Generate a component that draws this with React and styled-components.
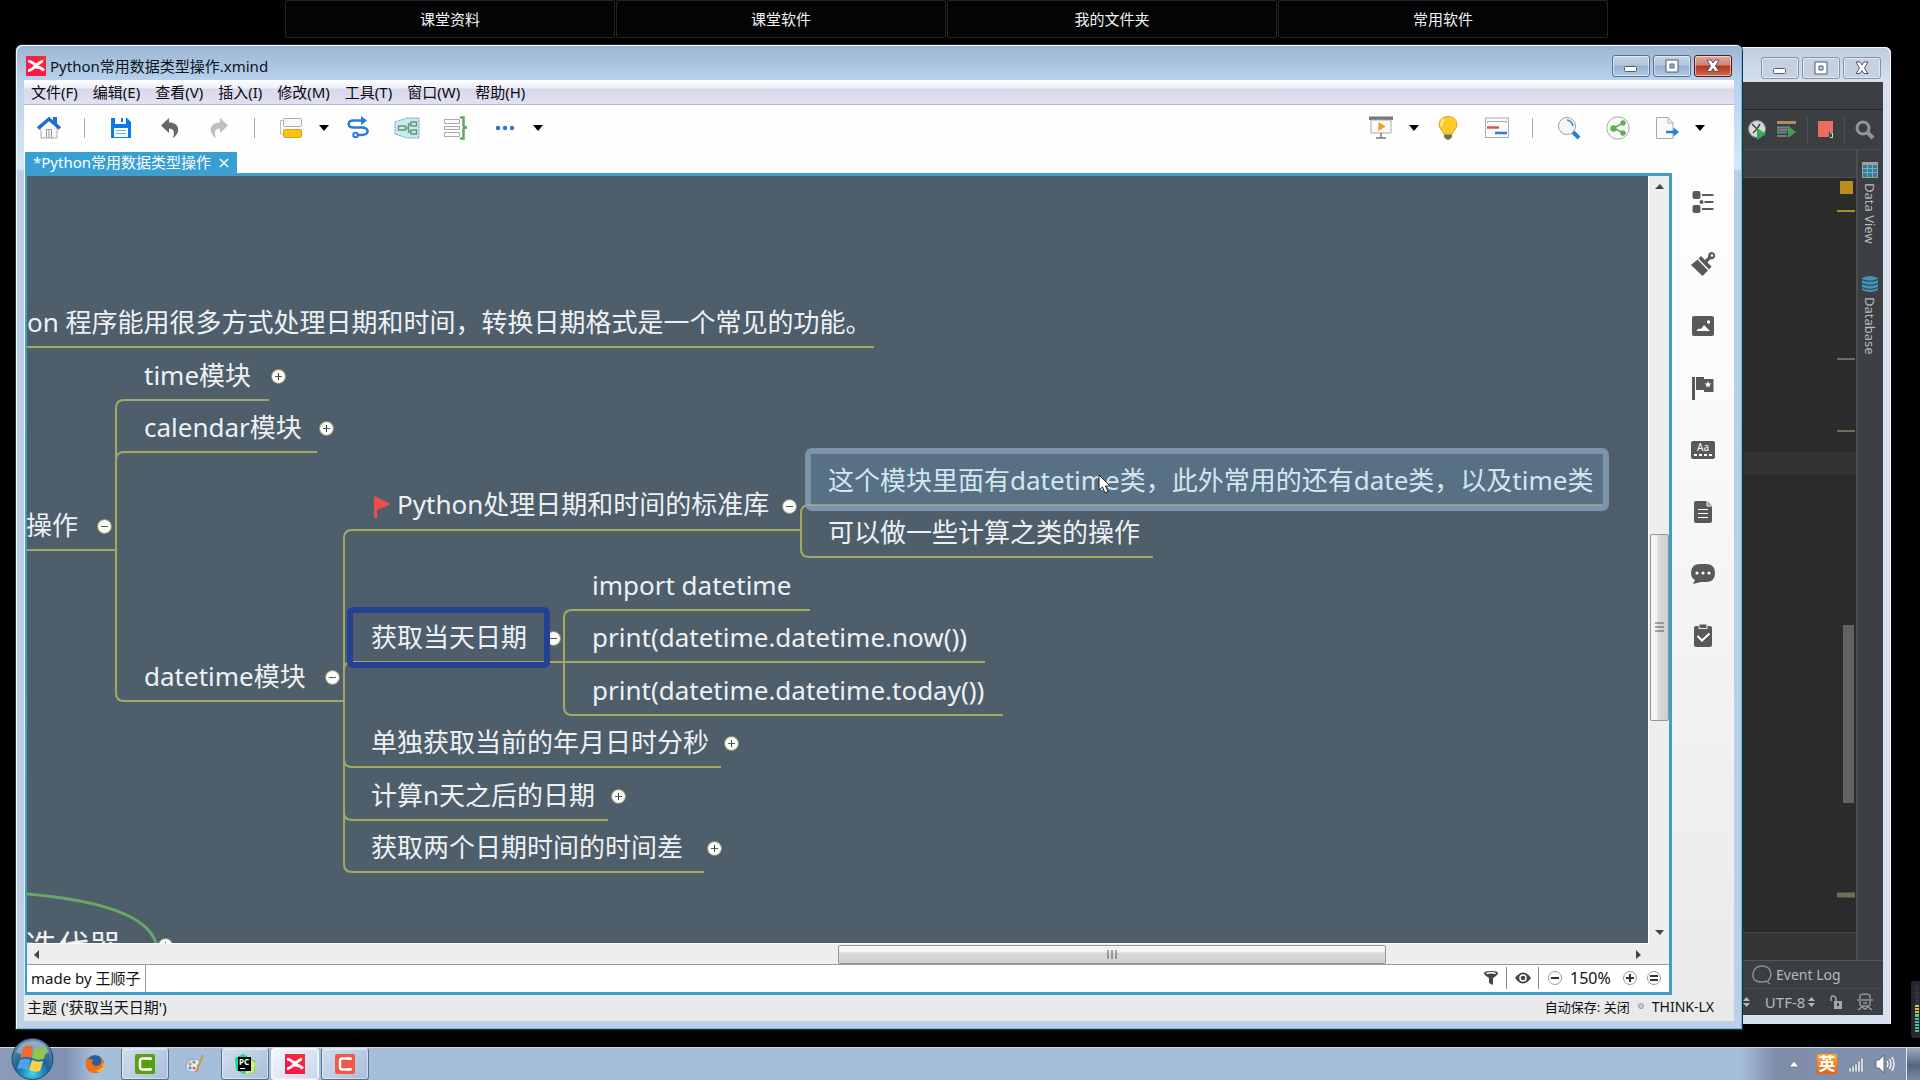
import React from "react";
import styled, { createGlobalStyle, css } from "styled-components";

const FONT = '"Noto Sans", "Noto Sans CJK SC", sans-serif';

const GlobalStyle = createGlobalStyle`
  *, *::before, *::after { box-sizing: border-box; }
  body { margin: 0; background: #000; font-family: ${FONT}; }
  button { font: inherit; color: inherit; background: none; border: 0; padding: 0; margin: 0; cursor: default; }
  svg { display: block; flex: none; }
`;

/* ---------- desktop ---------- */
const Desktop = styled.div`
  position: relative;
  display: flex;
  flex-direction: column;
  height: 100vh;
  overflow: hidden;
  background: #000;
`;
const Shelf = styled.nav`
  display: grid;
  grid-template-columns: repeat(4, 330px);
  gap: 1px;
  justify-content: center;
  height: 38px;
  padding-right: 27px;
`;
const ShelfButton = styled.button`
  padding-bottom: 2px;
  border: 1px solid #242424;
  border-radius: 2px;
  background: #030406;
  color: #f4f4f4;
  font-size: 15px;
`;
const Workspace = styled.main`
  position: relative;
  flex: 1;
`;

/* ---------- window chrome ---------- */
const Window = styled.section`
  position: absolute;
  display: flex;
  flex-direction: column;
  border-radius: 6px 6px 0 0;
`;
const MindWindow = styled(Window)`
  left: 16px;
  top: 7px;
  right: 178px;
  bottom: 18px;
  padding: 0 8px 8px;
  background: linear-gradient(#9bb5d0 0, #b8d1ec 35px, #d4e6f5 115px, #d4e6f5 124px, #b7cde8 126px, #bcd0e8 100%);
  box-shadow: inset 1px 1px 0 #f2f9ff, inset -1px -1px 0 #5fc0e6, 0 0 0 1px #18323f;
`;
const IdeWindow = styled(Window)`
  width: 220px;
  right: 29px;
  top: 9px;
  bottom: 23px;
  padding: 0 8px 9px 0;
  background: linear-gradient(#c0cddd, #d6e0ef 35px, #d7e0ef);
  box-shadow: inset -1px 1px 0 #f4f7fb;
`;
const TitleBar = styled.header`
  display: flex;
  align-items: center;
  gap: 4px;
  height: 35px;
  padding: 6px 2px 0;
  font-size: 15px;
  color: #0c1420;
`;
const WindowControls = styled.div`
  display: flex;
  gap: 3px;
  margin-left: auto;
`;
const ControlButton = styled.button`
  display: grid;
  place-items: center;
  width: 38px;
  height: 22px;
  border: 1px solid #5a7089;
  border-radius: 3px;
  background: linear-gradient(#c3d4e8 0, #b0c5de 45%, #98b0cd 50%, #b0c8e2);
  box-shadow: inset 0 0 0 1px rgba(255, 255, 255, 0.5);
  ${(p) => p.$kind === "close" && css`
    border-color: #551c20;
    background: linear-gradient(#e0a79d 0, #d28376 45%, #b5351c 50%, #cc6a4c);
  `}
  ${(p) => p.$kind === "faded" && css`
    border-color: #8593a5;
    background: #c5d1e0;
  `}
`;

/* ---------- xmind body ---------- */
const Client = styled.div`
  display: flex;
  flex-direction: column;
  flex: 1;
  min-height: 0;
  background: linear-gradient(#fff, #fbfbfb 30%, #e9e9e9);
`;
const MenuBar = styled.nav`
  display: flex;
  height: 25px;
  background: linear-gradient(#fff 0, #eceefa 8px, #d8d9ec 9px, #dfe1f2 23px);
  border-bottom: 1px solid #b4b5cd;
`;
const MenuItem = styled.button`
  padding: 0 8px 0 7px;
  font-size: 15px;
  line-height: 24px;
  color: #0a0a0a;
`;
const ToolBar = styled.div`
  display: flex;
  justify-content: space-between;
  height: 47px;
  padding: 0 25px 2px 0;
`;
const ToolGroup = styled.div`
  display: flex;
  align-items: center;
`;
const ToolButton = styled.button`
  display: grid;
  place-items: center;
  width: 49px;
  height: 40px;
`;
const DropButton = styled(ToolButton)`
  width: 18px;
`;
const ToolRule = styled.span`
  width: 23px;
  height: 20px;
  background: linear-gradient(#a9a9a9, #a9a9a9) center / 1px 100% no-repeat;
`;
const Body = styled.div`
  display: flex;
  flex: 1;
  min-height: 0;
`;
const Editor = styled.div`
  display: flex;
  flex-direction: column;
  flex: 1;
  min-width: 0;
  padding-left: 1px;
`;
const FileTab = styled.div`
  display: flex;
  align-items: center;
  align-self: flex-start;
  gap: 8px;
  height: 21px;
  padding: 0 8px;
  background: #379fd3;
  color: #fff;
  font-size: 15px;
  line-height: 21px;
`;
const EditorFrame = styled.div`
  display: flex;
  flex-direction: column;
  flex: 1;
  min-height: 0;
  border: 3px solid #429dc9;
  border-left-width: 2px;
  background: #fff;
`;
const CanvasRow = styled.div`
  display: flex;
  flex: 1;
  min-height: 0;
`;
const Canvas = styled.div`
  position: relative;
  flex: 1;
  overflow: hidden;
  background: #4f5e6b;
`;
const Lines = styled.svg`
  position: absolute;
  inset: 0;
  width: 100%;
  height: 100%;
`;
const Topic = styled.span`
  position: absolute;
  left: ${(p) => p.$x}px;
  top: ${(p) => p.$y - 21}px;
  color: ${(p) => (p.$hovered ? "#d3e6ef" : "#eef1f3")};
  font-size: ${(p) => (p.$large ? 32 : 26)}px;
  line-height: 40px;
  white-space: nowrap;
`;
const Toggle = styled.button`
  position: absolute;
  left: ${(p) => p.$x - 8}px;
  top: ${(p) => p.$y - 7}px;
  width: 15px;
  height: 15px;
  border: 1px solid #8b8f63;
  border-radius: 50%;
  background:
    linear-gradient(#555a5e, #555a5e) center / 7px 1px no-repeat,
    ${(p) => (p.$open ? "" : "linear-gradient(#333a40, #333a40) center / 1px 7px no-repeat,")}
    #fbfcf8;
`;
const HoverBox = styled.div`
  position: absolute;
  left: 778px;
  top: 272px;
  width: 804px;
  height: 63px;
  border: 6px solid rgba(145, 170, 195, 0.7);
  border-radius: 7px;
  background: rgba(100, 140, 170, 0.4);
  background-clip: padding-box;
`;
const SelectionBox = styled.div`
  position: absolute;
  left: 320px;
  top: 431px;
  width: 203px;
  height: 61px;
  border: 6px solid #234296;
  border-radius: 6px;
`;
const Pointer = styled.svg`
  position: absolute;
  left: 1071px;
  top: 298px;
`;
const VScroll = styled.div`
  display: flex;
  flex-direction: column;
  align-items: center;
  width: 21px;
  padding: 7px 0;
  background: #eee;
  border-left: 1px solid #fff;
`;
const HScroll = styled.div`
  display: flex;
  align-items: center;
  height: 21px;
  margin-right: 21px;
  padding: 0 6px;
  background: #eee;
  border-top: 1px solid #fff;
`;
const HScrollRow = styled.div`
  background: #eee;
  border-bottom: 1px solid #999;
`;
const Spacer = styled.div`
  flex: ${(p) => p.$grow} 1 0;
`;
const Thumb = styled.div`
  display: grid;
  place-items: center;
  flex: none;
  border: 1px solid #959595;
  border-radius: 2px;
  ${(p) => p.$vertical
    ? css`width: 19px; height: 187px; background: linear-gradient(90deg, #f4f4f4 35%, #dadada 40%, #cfcfcf);`
    : css`width: 548px; height: 19px; background: linear-gradient(#f4f4f4 35%, #dadada 40%, #cfcfcf);`}
`;
const SheetBar = styled.div`
  display: flex;
  align-items: center;
  height: 27px;
  background: #fff;
`;
const SheetTab = styled.button`
  height: 27px;
  padding: 0 4px 3px;
  border-right: 1px solid #999;
  font-size: 15px;
  color: #111;
`;
const SheetTools = styled.div`
  display: flex;
  align-items: center;
  margin-left: auto;
  padding: 0 3px 2px 0;
`;
const SheetTool = styled.button`
  display: grid;
  place-items: center;
  width: ${(p) => (p.$wide ? 31 : 24)}px;
  height: 24px;
`;
const SheetRule = styled.span`
  width: 1px;
  height: 22px;
  background: #8a8a8a;
`;
const ZoomValue = styled.output`
  width: 48px;
  font-size: 16px;
  color: #111;
`;
const SideBar = styled.aside`
  display: flex;
  flex-direction: column;
  width: 62px;
  padding: 19px 0 0;
`;
const SideButton = styled.button`
  display: grid;
  place-items: center;
  width: 62px;
  height: 62px;
`;
const StatusBar = styled.footer`
  display: flex;
  align-items: center;
  height: 26px;
  padding: 0 20px 4px 3px;
  font-size: 15px;
  color: #111;
`;
const SaveState = styled.span`
  display: flex;
  align-items: center;
  gap: 8px;
  margin-left: auto;
  font-size: 13px;
`;
const Licence = styled.span`
  font-size: 14px;
`;
const Dot = styled.i`
  width: 6px;
  height: 6px;
  border: 1px solid #999;
  border-radius: 50%;
  background: #ccc;
`;

/* ---------- ide ---------- */
const IdeClient = styled.div`
  display: flex;
  flex-direction: column;
  flex: 1;
  min-height: 0;
  padding-left: 72px;
  background: #3c3f41;
  color: #b6b9bb;
`;
const IdeMenu = styled.div`
  height: 28px;
  border-bottom: 1px solid #282828;
`;
const IdeTools = styled.div`
  display: flex;
  align-items: center;
  justify-content: space-between;
  height: 40px;
  padding: 0 8px 0 4px;
  border-bottom: 1px solid #4b4d4f;
`;
const IdeRule = styled.span`
  height: 26px;
  border-left: 1px dotted #5b5e60;
`;
const IdeMain = styled.div`
  display: flex;
  flex: 1;
  min-height: 0;
`;
const IdeEditor = styled.div`
  display: flex;
  flex-direction: column;
  flex: 1;
  border-right: 2px solid #4d4e50;
`;
const IdeTabs = styled.div`
  height: 28px;
  border-bottom: 1px solid #4a4b4c;
`;
const IdeCode = styled.div`
  flex: 1;
  background: linear-gradient(#2b2b2b, #2b2b2b 274px, #323232 274px, #323232 297px, #2b2b2b 297px);
`;
const IdeFoot = styled.div`
  height: 28px;
  border-top: 1px solid #454647;
  background: #333436;
`;
const Gutter = styled.svg`
  margin-left: auto;
`;
const IdeRail = styled.nav`
  display: flex;
  flex-direction: column;
  gap: 32px;
  width: 25px;
  padding-top: 12px;
`;
const RailButton = styled.button`
  display: flex;
  flex-direction: column;
  align-items: center;
  gap: 5px;
  width: 24px;
  font-size: 13px;
  line-height: 18px;
  span { writing-mode: vertical-rl; }
`;
const IdeLog = styled.button`
  display: flex;
  align-items: center;
  gap: 4px;
  height: 28px;
  padding-left: 9px;
  border-top: 1px solid #55585a;
  font-size: 14px;
`;
const IdeStatus = styled.footer`
  display: flex;
  align-items: center;
  justify-content: space-between;
  height: 27px;
  padding: 0 10px 0 0;
  font-size: 15px;
  border-top: 1px solid #47494b;
`;
const Encoding = styled.span`
  display: flex;
  align-items: center;
  gap: 3px;
`;

/* ---------- taskbar ---------- */
const TaskBar = styled.footer`
  display: flex;
  height: 33px;
  border-top: 1px solid #c7d9ec;
  background: linear-gradient(90deg, #8b9dba 0, #7f90b0 66px, #a5bfdb 94px, #a5bfdb calc(100% - 180px), #7f8da9 calc(100% - 145px), #8291ab);
`;
const StartButton = styled.button`
  width: 70px;
  height: 42px;
  margin-top: -10px;
  padding-left: 11px;
  z-index: 1;
`;
const TaskButton = styled.button`
  display: grid;
  place-items: center;
  width: 48px;
  height: 32px;
  margin: 0 1px;
  border-radius: 3px;
  ${(p) => p.$running && css`
    border: 1px solid #5b6f8c;
    border-top-color: #d5e3f2;
    background: linear-gradient(135deg, #d2deed, #a8bedb);
    box-shadow: inset 0 0 0 1px rgba(255, 255, 255, 0.45);
  `}
  ${(p) => p.$active && css`
    border-color: #f2f7fd;
    background: linear-gradient(135deg, #f4f7fb, #c8d6ec);
  `}
`;
const Tray = styled.div`
  display: flex;
  align-items: center;
  gap: 11px;
  margin-left: auto;
`;
const TrayExpander = styled.button`
  padding-right: 6px;
`;
const InputMethod = styled.button`
  width: 20px;
  height: 20px;
  border-radius: 2px;
  background: linear-gradient(#ffb030, #e85f10);
  color: #fff;
  font-size: 17px;
  font-weight: 700;
  line-height: 20px;
`;
const ShowDesktop = styled.button`
  width: 14px;
  height: 32px;
  border-left: 1px solid #dce6f0;
  background: linear-gradient(#9ba9bd, #55657e 55%, #7c8ba3);
`;
const Meter = styled.svg`
  position: absolute;
  right: 0;
  bottom: 42px;
`;

/* ---------- drawings ---------- */
const Svg = ({ w = 24, h = 24, children, ...rest }) => (
  <svg width={w} height={h} viewBox={`0 0 ${w} ${h}`} fill="none" aria-hidden="true" {...rest}>{children}</svg>
);
const Caret = () => <Svg w={10} h={6}><path d="M0 0H10L5 6Z" fill="#000" /></Svg>;
const XLogo = () => (
  <Svg w={20} h={20}>
    <defs><linearGradient id="xg" x1="0" y1="1" x2="1" y2="0"><stop stopColor="#fb124c" /><stop offset=".6" stopColor="#fb1e45" /><stop offset="1" stopColor="#ee3b22" /></linearGradient></defs>
    <rect width="20" height="20" fill="url(#xg)" />
    <path d="M2 5.500C6 4.500 6.500 8.500 10 8.500S14 5 17 5.500M2 14.500C6 15 6.500 11 10 11S15 11.500 18 14.500" stroke="#fff" strokeWidth="2.800" />
    <path d="M7.500 8H12.500V12H7.500Z" fill="#fff" />
  </Svg>
);
const ICONS = {
  home: <Svg><path d="M4 11V22H20V11L12 4Z" fill="#fafafa" stroke="#aaa" /><path d="M9.500 22V13.500H14.500V22M12 14V22" stroke="#999" /><path d="M1 12.500L12 3L23 12.500" stroke="#1d6fd4" strokeWidth="3.500" /><path d="M16 1H20V8H16Z" fill="#1d6fd4" /></Svg>,
  save: <Svg><path d="M2 2H18L22 6V22H2Z" fill="#0a7ae6" /><path d="M6 2H17V8H6Z" fill="#fff" /><path d="M12 2H14V6H12Z" fill="#0a7ae6" /><path d="M5 12H19V21H5Z" fill="#f4f9ff" /><path d="M7 14.500H17M7 17.500H17" stroke="#8aa8c8" /></Svg>,
  undo: <Svg><path d="M11 2L3 9.500L11 17V12.500C16 12.500 17 16 15 22C23 17 22 6.500 11 6.500Z" fill="#666" /></Svg>,
  redo: <Svg><path d="M13 2L21 9.500L13 17V12.500C8 12.500 7 16 9 22C1 17 2 6.500 13 6.500Z" fill="#bfbfbf" /></Svg>,
  topic: <Svg><path d="M4 4.500H1.500V18H4" stroke="#bbb" /><rect x="4.500" y="2.500" width="18" height="8" rx="1" fill="#f7f7f7" stroke="#aaa" /><rect x="4.500" y="13.500" width="18" height="8" rx="1" fill="#fdc112" stroke="#dca313" /></Svg>,
  relation: <Svg><path d="M17 4.500H7.500C1 4.500 1 11.500 7.500 11.500H16C23.500 11.500 23.500 19 16 19H12" stroke="#2a7bd4" strokeWidth="2.500" /><path d="M15 0L21 4.500L15 9Z" fill="#2a7bd4" /><circle cx="9.500" cy="19" r="2.200" fill="#fff" stroke="#2a7bd4" strokeWidth="2" /></Svg>,
  boundary: <Svg w={26}><path d="M1 6L13 2H25V22H13L1 18Z" fill="#cfe6f7" stroke="#5a9fd0" strokeDasharray="2 1" /><path d="M4.500 10H11.500V14H4.500ZM17 6H22.500V10H17ZM17 14H22.500V18H17ZM11.500 12H14.500M17 8H14.500V16H17" stroke="#5f9e62" strokeWidth="1.400" fill="none" /></Svg>,
  summary: <Svg w={26}><path d="M1.500 3.500H16.500V7.500H1.500ZM1.500 10.500H16.500V13.500H1.500ZM1.500 16.500H16.500V20.500H1.500Z" stroke="#aaa" fill="#fafafa" /><path d="M17 1.500H20.500V9.500Q20.500 11.500 24 11.500Q20.500 11.500 20.500 13.500V22.500H17" stroke="#62a85d" strokeWidth="2.500" /></Svg>,
  more: <Svg><circle cx="5" cy="12" r="2.200" fill="#2576d2" /><circle cx="12" cy="12" r="2.200" fill="#2576d2" /><circle cx="19" cy="12" r="2.200" fill="#2576d2" /></Svg>,
  present: <Svg w={26}><rect x="1" y="0.500" width="24" height="3.500" fill="#777" /><path d="M3 4H23V17H3Z" fill="#fafafa" stroke="#aaa" /><path d="M10.500 6L17.500 10.500L10.500 15Z" fill="#f39a1f" /><path d="M13 17V22M8 22H18" stroke="#777" strokeWidth="1.500" /></Svg>,
  bulb: <Svg><path d="M12 .5C6 .5 3 4.500 3 9C3 13 7 15 8 18H16C17 15 21 13 21 9C21 4.500 18 .5 12 .5Z" fill="#fecb2b" stroke="#e0a21e" /><path d="M8 3.500Q5 6 5.500 10" stroke="#fff0a8" strokeWidth="2" /><path d="M8 18.500H16V21Q14 24 12 24T8 21Z" fill="#77704c" /></Svg>,
  gantt: <Svg w={26}><rect x="1.500" y="2" width="23" height="19.500" fill="#fafafa" stroke="#aaa" /><path d="M3.500 7V5.500H22.500V7" stroke="#aaa" /><path d="M3 11.500H15" stroke="#c85f50" strokeWidth="2.500" /><path d="M11 17H23" stroke="#2a7fd8" strokeWidth="2.500" /></Svg>,
  search: <Svg><path d="M16 16L22 22" stroke="#277fcf" strokeWidth="4" /><circle cx="10" cy="10" r="8.500" fill="#f4f7fa" stroke="#a0a0a0" /><path d="M10 4Q15 5 16 10" stroke="#2b8de0" strokeWidth="1.500" /></Svg>,
  share: <Svg><circle cx="12" cy="12" r="11.200" fill="#fafafa" stroke="#aaa" /><path d="M17 7L8 12L17 17" stroke="#5eaf52" strokeWidth="1.500" /><circle cx="17" cy="7" r="2.700" fill="#5eaf52" /><circle cx="7.500" cy="12.500" r="3.200" fill="#5eaf52" /><circle cx="17" cy="17" r="2.700" fill="#5eaf52" /></Svg>,
  export: <Svg><path d="M1.500 1.500H13L18 7V22.500H1.500ZM13 1.500V7H18" fill="#fafafa" stroke="#aaa" /><path d="M11 16H20" stroke="#257ddd" strokeWidth="2.500" /><path d="M18.500 11.500L24 16L18.500 20.500Z" fill="#257ddd" /></Svg>,
};
const G = "#595959";
const SIDE = [
  ["大纲", <Svg key="a"><rect x="1.500" y="1" width="8" height="8" rx="2" fill={G} /><rect x="1.500" y="15" width="8" height="8" rx="2" fill={G} /><circle cx="10.500" cy="12" r="2" fill={G} /><path d="M11 5H22.500M13.500 12H22.500M11 19H22.500" stroke={G} strokeWidth="2" /></Svg>],
  ["格式", <Svg key="b"><path d="M0 13L6.500 7.500L17 18.500L11.500 24Z" fill={G} /><path d="M7.500 6.500L10 4L14 8L17 5Q17 0 21 0Q25 1 24 5Q22 8 19 7.500L16.500 10.500L20.500 14.500L18 17.500Z" fill={G} /><circle cx="21" cy="3.500" r="1.300" fill="#fff" /></Svg>],
  ["图片", <Svg key="c"><rect x="1" y="2" width="22" height="20" rx="2" fill={G} /><path d="M5 17L8 14.500L10 15L13 11L19 17Z" fill="#fff" /><circle cx="17.500" cy="8" r="1.700" fill="#fff" /></Svg>],
  ["图标", <Svg key="d"><path d="M1 1H4V24H1Z" fill={G} /><path d="M5 1H13V3H22.500V16H13V14H5Z" fill={G} /><path d="M17 5L18 7.500H20.500L18.500 9L19 11.500L17 10L15 11.500L15.500 9L13.500 7.500H16Z" fill="#fff" /></Svg>],
  ["标签", <Svg key="e"><rect y="3" width="24" height="18" rx="2" fill={G} /><text x="12" y="13" fill="#fff" fontSize="10" textAnchor="middle" fontFamily="Noto Sans">Aa</text><path d="M3 17H21" stroke="#fff" strokeWidth="2" strokeDasharray="3 2" /></Svg>],
  ["备注", <Svg key="f"><path d="M5 1H16L21 6V21Q21 23 19 23H5Q3 23 3 21V3Q3 1 5 1Z" fill={G} /><path d="M16 1V6H21" stroke="#f5f5f5" fill="#999" /><path d="M7 9.500H17M7 13.500H17M7 17.500H17" stroke="#fff" /></Svg>],
  ["批注", <Svg key="g"><path d="M9 2H15Q24 2 24 11T15 20H10L2 22L4 18Q0 16 0 11Q0 2 9 2Z" fill={G} /><circle cx="6" cy="11" r="1.600" fill="#fff" /><circle cx="12" cy="11" r="1.600" fill="#fff" /><circle cx="18" cy="11" r="1.600" fill="#fff" /></Svg>],
  ["任务", <Svg key="h"><rect x="3" y="2" width="18" height="21" rx="2" fill={G} /><path d="M8 0H16V4.500H8Z" fill={G} stroke="#f2f2f2" /><path d="M6.500 12L11 16.500L18.500 9.500" stroke="#fff" strokeWidth="2" /></Svg>],
];
const Tri = ({ dir }) => {
  const d = { up: "M0 6L5 1L9 6Z", down: "M0 1H9L5 6Z", left: "M6 0V9L1 5Z", right: "M1 0V9L6 5Z" }[dir];
  const flat = dir === "up" || dir === "down";
  return <Svg w={flat ? 9 : 7} h={flat ? 7 : 9}><path d={d} fill="#444" /></Svg>;
};
const ZoomMark = ({ d }) => <Svg w={16} h={16}><circle cx="8" cy="8" r="6.500" stroke="#999" /><path d={d} stroke="#333" strokeWidth="2" /></Svg>;
const MinGlyph = () => <Svg w={14} h={14}><rect x=".5" y="7.500" width="12" height="5" rx="1" fill="#fff" stroke="#4d5d73" /></Svg>;
const MaxGlyph = () => <Svg w={14} h={14}><path d="M1 1H13V13H1ZM5 5V9H9V5Z" fill="#fff" fillRule="evenodd" stroke="#4d5d73" /></Svg>;
const CloseGlyph = () => <Svg w={14} h={14}><path d="M1 1H5L7 4L9 1H13L9.500 7L13 12.500H9L7 9.500L5 12.500H1L4.500 7Z" fill="#fff" stroke="#5b5561" /></Svg>;
const Camtasia = ({ color }) => <Svg w={20} h={20}><rect width="20" height="20" rx="2" fill={color} /><path d="M15.500 6V4.500H7.500Q5 4.500 5 7V13Q5 15.500 7.500 15.500H15.500V14" stroke="#fff" strokeWidth="2.500" /></Svg>;
const Updown = () => <Svg w={7} h={10}><path d="M0 4L3.500 0L7 4ZM0 6H7L3.500 10Z" fill="#b6b9bb" /></Svg>;

const Controls = ({ faded }) => (
  <WindowControls>
    <ControlButton aria-label="最小化" $kind={faded ? "faded" : ""}><MinGlyph /></ControlButton>
    <ControlButton aria-label="最大化" $kind={faded ? "faded" : ""}><MaxGlyph /></ControlButton>
    <ControlButton aria-label="关闭" $kind={faded ? "faded" : "close"}><CloseGlyph /></ControlButton>
  </WindowControls>
);

/* ---------- data ---------- */
const MENUS = ["文件(F)", "编辑(E)", "查看(V)", "插入(I)", "修改(M)", "工具(T)", "窗口(W)", "帮助(H)"];
const LEFT_TOOLS = ["home", "|", "save", "undo", "redo", "|", "topic", "v", "relation", "boundary", "summary", "more", "v"];
const RIGHT_TOOLS = ["present", "v", "bulb", "gantt", "|", "search", "share", "export", "v"];
const TOPICS = [
  [0, 147, "on 程序能用很多方式处理日期和时间，转换日期格式是一个常见的功能。"],
  [117, 200, "time模块"],
  [117, 252, "calendar模块"],
  [-1, 350, "操作"],
  [117, 501, "datetime模块"],
  [370, 329, "Python处理日期和时间的标准库"],
  [801, 305, "这个模块里面有datetime类，此外常用的还有date类，以及time类", true],
  [801, 357, "可以做一些计算之类的操作"],
  [565, 410, "import datetime"],
  [565, 462, "print(datetime.datetime.now())"],
  [565, 515, "print(datetime.datetime.today())"],
  [344, 462, "获取当天日期"],
  [344, 567, "单独获取当前的年月日时分秒"],
  [344, 620, "计算n天之后的日期"],
  [344, 672, "获取两个日期时间的时间差"],
];
const TOGGLES = [
  [252, 200, 0], [300, 252, 0], [78, 350, 1], [306, 501, 1], [763, 330, 1],
  [527, 462, 1], [705, 567, 0], [592, 620, 0], [688, 672, 0], [139, 769, 0],
];
const LINKS = [
  "M0 171H847", "M0 374H89",
  "M242 224H97Q89 224 89 232V517Q89 525 97 525H317", "M290 276H97Q89 276 89 284",
  "M774 354H325Q317 354 317 362V688Q317 696 325 696H677",
  "M317 494Q317 486 325 486H958", "M317 583Q317 591 325 591H694", "M317 636Q317 644 325 644H581",
  "M1575 329H782Q774 329 774 337V373Q774 381 782 381H1126",
  "M783 434H545Q537 434 537 442V531Q537 539 545 539H976",
];

const Tools = ({ items }) => (
  <ToolGroup>
    {items.map((t, i) =>
      t === "|" ? <ToolRule key={i} /> :
      t === "v" ? <DropButton key={i} aria-label="展开"><Caret /></DropButton> :
      <ToolButton key={i} aria-label={t}>{ICONS[t]}</ToolButton>)}
  </ToolGroup>
);

const MindMap = () => (
  <Canvas>
    <Lines fill="none" stroke="#a5a862" strokeWidth="2">
      {LINKS.map((d) => <path key={d} d={d} />)}
      <path d="M0 718Q117 728 129 767" stroke="#67a768" strokeWidth="3" />
      <path d="M347 320L364 328L350 334V342H347Z" fill="#f04d4d" stroke="none" />
    </Lines>
    <HoverBox />
    {TOPICS.map(([x, y, text, hovered]) => <Topic key={text} $x={x} $y={y} $hovered={hovered}>{text}</Topic>)}
    <Topic $x={-2} $y={771} $large>迭代器</Topic>
    {TOGGLES.map(([x, y, open]) => <Toggle key={`${x}-${y}`} $x={x} $y={y} $open={open} aria-label={open ? "收起" : "展开"} />)}
    <SelectionBox />
    <Pointer width="13" height="20" viewBox="0 0 13 20"><path d="M1 1V16L4.500 13L7 19L10 17.500L7.500 12H12Z" fill="#fff" stroke="#222" /></Pointer>
  </Canvas>
);

const MindApp = () => (
  <MindWindow>
    <TitleBar><XLogo /><span>Python常用数据类型操作.xmind</span><Controls /></TitleBar>
    <Client>
      <MenuBar>{MENUS.map((m) => <MenuItem key={m}>{m}</MenuItem>)}</MenuBar>
      <ToolBar><Tools items={LEFT_TOOLS} /><Tools items={RIGHT_TOOLS} /></ToolBar>
      <Body>
        <Editor>
          <FileTab>
            <span>*Python常用数据类型操作</span>
            <button aria-label="关闭标签"><Svg w={10} h={10}><path d="M1 1L9 9M9 1L1 9" stroke="#fff" strokeWidth="1.500" /></Svg></button>
          </FileTab>
          <EditorFrame>
            <CanvasRow>
              <MindMap />
              <VScroll><Tri dir="up" /><Spacer $grow={342} /><Thumb $vertical><Svg w={9} h={10}><path d="M0 1H9M0 5H9M0 9H9" stroke="#555" /></Svg></Thumb><Spacer $grow={207} /><Tri dir="down" /></VScroll>
            </CanvasRow>
            <HScrollRow>
              <HScroll><Tri dir="left" /><Spacer $grow={796} /><Thumb><Svg w={10} h={9}><path d="M1 0V9M5 0V9M9 0V9" stroke="#555" /></Svg></Thumb><Spacer $grow={248} /><Tri dir="right" /></HScroll>
            </HScrollRow>
            <SheetBar>
              <SheetTab>made by 王顺子</SheetTab>
              <SheetTools>
                <SheetTool $wide aria-label="筛选"><Svg w={16} h={16}><path d="M1 3Q1 1 8 1T15 3Q15 5 10 8V15L6 13V8Q1 5 1 3Z" fill="#444" /><path d="M3.500 3.500Q8 2 12.500 3.500" stroke="#fff" strokeWidth="1.500" /></Svg></SheetTool>
                <SheetRule />
                <SheetTool $wide aria-label="预览"><Svg w={16} h={16}><path d="M0 8Q8-3 16 8Q8 19 0 8Z" fill="#444" /><circle cx="8" cy="8" r="3" stroke="#fff" strokeWidth="1.500" /></Svg></SheetTool>
                <SheetRule />
                <SheetTool $wide aria-label="缩小"><ZoomMark d="M4 8H12" /></SheetTool>
                <ZoomValue>150%</ZoomValue>
                <SheetTool aria-label="放大"><ZoomMark d="M4 8H12M8 4V12" /></SheetTool>
                <SheetTool aria-label="适应大小"><ZoomMark d="M4 6H12M4 10H12" /></SheetTool>
              </SheetTools>
            </SheetBar>
          </EditorFrame>
        </Editor>
        <SideBar>{SIDE.map(([label, icon]) => <SideButton key={label} aria-label={label}>{icon}</SideButton>)}</SideBar>
      </Body>
      <StatusBar>
        <span>主题 ('获取当天日期')</span>
        <SaveState><span>自动保存: 关闭</span><Dot /><Licence>THINK-LX</Licence></SaveState>
      </StatusBar>
    </Client>
  </MindWindow>
);

const Ide = () => (
  <IdeWindow>
    <TitleBar><Controls faded /></TitleBar>
    <IdeClient>
      <IdeMenu />
      <IdeTools>
        <button aria-label="Profile"><Svg w={20} h={20}><circle cx="10" cy="9" r="8.500" fill="#d8d8d8" stroke="#888" /><path d="M10 9L5 4M10 9L13 4M10 9L6 13" stroke="#444" strokeWidth="1.500" /><path d="M10 8L19 14L10 20Z" fill="#33a855" /></Svg></button>
        <button aria-label="Run concurrently"><Svg w={20} h={20}><path d="M0 2.500H19" stroke="#b58a55" strokeWidth="3" /><path d="M0 7.500H13M0 12.500H10" stroke="#4f8fae" strokeWidth="2" /><path d="M0 10H12M0 16H10" stroke="#a9895e" strokeWidth="1.500" /><path d="M11 6L19 12L11 18Z" fill="#4b9b51" /></Svg></button>
        <IdeRule />
        <button aria-label="Stop"><Svg w={16} h={18}><rect width="15" height="16" fill="#ea6d62" /><path d="M11 11H16V18H11Z" fill="#3c3f41" /><path d="M12 12H14.500V16.500H12" stroke="#ddd" /></Svg></button>
        <IdeRule />
        <button aria-label="Search"><Svg w={20} h={20}><circle cx="8" cy="8" r="6" stroke="#929496" strokeWidth="3" /><path d="M12 12L18 18" stroke="#929496" strokeWidth="4" /></Svg></button>
      </IdeTools>
      <IdeMain>
        <IdeEditor>
          <IdeTabs />
          <IdeCode>
            <Gutter width="20" height="740" viewBox="0 0 20 740">
              <rect x="4" y="3" width="13" height="13" fill="#b98f1b" />
              <path d="M1 33H19" stroke="#b08d25" strokeWidth="2" />
              <path d="M1 181H19M1 253H19" stroke="#766b5b" strokeWidth="2" />
              <rect x="7" y="447" width="11" height="178" fill="#626262" />
              <path d="M1 717H19" stroke="#716f56" strokeWidth="5" />
            </Gutter>
          </IdeCode>
          <IdeFoot />
        </IdeEditor>
        <IdeRail>
          <RailButton><Svg w={16} h={16}><rect width="16" height="16" fill="#9aa0a4" /><path d="M1 3H5V6H1ZM6 3H10V6H6ZM11 3H15V6H11ZM1 7H5V10H1ZM6 7H10V10H6ZM11 7H15V10H11ZM1 11H5V15H1ZM6 11H10V15H6ZM11 11H15V15H11Z" fill="#2583a6" /></Svg><span>Data View</span></RailButton>
          <RailButton><Svg w={16} h={16}><path d="M0 2Q8-2 16 2V14Q8 18 0 14Z" fill="#4694b3" /><path d="M0 3.500Q8 7 16 3.500M0 7.500Q8 11 16 7.500M0 11.500Q8 15 16 11.500" stroke="#2e4a56" strokeWidth="1.200" /></Svg><span>Database</span></RailButton>
        </IdeRail>
      </IdeMain>
      <IdeLog><Svg w={20} h={20}><path d="M16 16Q19 13 19 9Q18 1 10 1T1 9T10 17Q13 17 14 16L18 19" stroke="#8c8f91" strokeWidth="1.500" /></Svg><span>Event Log</span></IdeLog>
      <IdeStatus>
        <Updown />
        <Encoding>UTF-8<Updown /></Encoding>
        <Svg w={12} h={14}><path d="M1 6V3Q1 1 3 1T6 3V7" stroke="#a5a7a9" strokeWidth="1.500" /><path d="M4 6H12V14H4Z" fill="#a5a7a9" /><path d="M8 8V11" stroke="#3c3f41" strokeWidth="2" /></Svg>
        <Svg w={16} h={18}><path d="M3 6V3Q3 1 8 1T13 3V6M0 7H16M3 8V11Q3 13 5 13H11Q13 13 13 11V8M1 17L5 14L8 16L11 14L15 17M6 10H10" stroke="#929496" strokeWidth="1.500" /></Svg>
      </IdeStatus>
    </IdeClient>
  </IdeWindow>
);

const Tasks = () => (
  <TaskBar>
    <StartButton aria-label="开始">
      <Svg w={43} h={42}>
        <defs><radialGradient id="orb" cx=".5" cy=".85" r=".8"><stop stopColor="#42d4f5" /><stop offset=".5" stopColor="#17639c" /><stop offset="1" stopColor="#6e8aa8" /></radialGradient></defs>
        <circle cx="21.500" cy="21" r="20.500" fill="url(#orb)" stroke="#274766" />
        <path d="M5 14Q10 3 22 3T38 14Q30 20 21 19T5 14Z" fill="#dbe8f2" opacity=".4" />
        <path d="M13 9Q17 6 22 9L20 20Q15 18 9 20Z" fill="#ee6b2f" />
        <path d="M24 10Q29 12 36 9L33 21Q27 23 21 20Z" fill="#93c847" />
        <path d="M9 22Q14 19 19 22L17 32Q12 29 6 31Z" fill="#4fa5e3" />
        <path d="M21 22Q26 25 32 23L29 33Q23 35 18 32Z" fill="#fdd04a" />
      </Svg>
    </StartButton>
    <TaskButton aria-label="Firefox"><Svg w={20} h={20}><circle cx="10" cy="10" r="9" fill="#27609e" /><path d="M2 3Q3 6 6 5Q9 6 7 9Q9 14 14 11Q18 9 15 3Q20 7 19 12Q17 20 9 19Q0 18 1 9Z" fill="#ed7118" /><path d="M15 3Q19 7 17 13Q14 17 9 16Q19 22 19 10Z" fill="#f8b52d" /></Svg></TaskButton>
    <TaskButton $running aria-label="Camtasia"><Camtasia color="#58a010" /></TaskButton>
    <TaskButton aria-label="画图"><Svg w={20} h={20}><path d="M1 13Q1 6 9 5Q16 5 15 10Q11 10 13 13Q13 18 7 18T1 13Z" fill="#e4edf2" stroke="#7da2b8" /><circle cx="5" cy="10" r="1.700" fill="#c96" /><circle cx="9" cy="8" r="1.700" fill="#6a9" /><circle cx="5" cy="14" r="1.700" fill="#59c" /><circle cx="9" cy="14" r="1.500" fill="#d66" /><path d="M18 1L11 18" stroke="#c99557" strokeWidth="2" /></Svg></TaskButton>
    <TaskButton $running aria-label="PyCharm"><Svg w={20} h={20}><path d="M0 4L8 0L20 7V18L9 20L1 16Z" fill="#22d38a" /><path d="M14 3L20 9L19 18L10 20Z" fill="#e6ef57" /><rect x="3" y="3" width="13" height="14" fill="#000" /><text x="4" y="11" fontSize="8" fontWeight="700" fill="#fff" fontFamily="Noto Sans">PC</text><path d="M5 14.500H10" stroke="#fff" /></Svg></TaskButton>
    <TaskButton $running $active aria-label="XMind"><XLogo /></TaskButton>
    <TaskButton $running aria-label="Camtasia Recorder"><Camtasia color="#f25748" /></TaskButton>
    <Tray>
      <TrayExpander aria-label="显示隐藏的图标"><Svg w={12} h={8}><path d="M1 7L6 1L11 7Z" fill="#fff" stroke="#6c7c92" /></Svg></TrayExpander>
      <InputMethod>英</InputMethod>
      <Svg w={16} h={16}><path d="M1 16V12H3V16ZM4 16V10H6V16ZM7 16V8H9V16ZM10 16V5H12V16ZM13 16V2H15V16Z" fill="#fff" stroke="#5d6c80" strokeWidth=".5" /></Svg>
      <Svg w={20} h={20}><path d="M1 6H4L9 1V19L4 14H1Z" fill="#fff" stroke="#5d6c80" /><path d="M12 7Q14 10 12 13M14.500 5Q17.500 10 14.500 15M17 3Q21 10 17 17" stroke="#fff" strokeWidth="1.300" /></Svg>
      <ShowDesktop aria-label="显示桌面" />
    </Tray>
  </TaskBar>
);

export default function App() {
  return (
    <Desktop>
      <GlobalStyle />
      <Shelf>{["课堂资料", "课堂软件", "我的文件夹", "常用软件"].map((s) => <ShelfButton key={s}>{s}</ShelfButton>)}</Shelf>
      <Workspace><Ide /><MindApp /></Workspace>
      <Tasks />
      <Meter width="9" height="57" viewBox="0 0 9 57">
        <rect width="12" height="57" rx="3" fill="#272633" />
        <path d="M6 5V24" stroke="#3c3a48" strokeWidth="4" strokeDasharray="1 1" />
        <path d="M6 24V34" stroke="#c8c644" strokeWidth="4" strokeDasharray="2 1" />
        <path d="M6 34V52" stroke="#4cc088" strokeWidth="4" strokeDasharray="2 1" />
      </Meter>
    </Desktop>
  );
}
